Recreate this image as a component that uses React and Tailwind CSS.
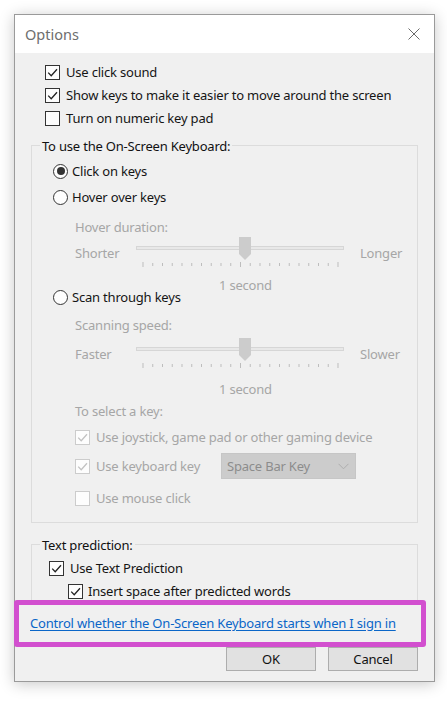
import React from 'react';

const FONT = { fontFamily: '"Noto Sans", "Open Sans", sans-serif' };

function CheckBox({ checked, disabled }) {
  return (
    <span
      className={`flex h-[15px] w-[15px] shrink-0 items-center justify-center border bg-[#fdfdfd] ${
        disabled ? 'border-[#cccccc]' : 'border-[#333333]'
      }`}
    >
      {checked && (
        <svg width="13" height="13" viewBox="0 0 13 13">
          <path
            d="M2.2 6.6 L5.2 9.7 L11 3.2"
            fill="none"
            stroke={disabled ? '#c2c2c2' : '#222'}
            strokeWidth="1.3"
          />
        </svg>
      )}
    </span>
  );
}

function Radio({ selected }) {
  return (
    <span className="flex h-[15px] w-[15px] shrink-0 items-center justify-center rounded-full border border-[#333333] bg-[#fdfdfd]">
      {selected && <span className="h-[8px] w-[8px] rounded-full bg-[#333333]" />}
    </span>
  );
}

function Slider({ left, right }) {
  const ticks = Array.from({ length: 21 }, (_, i) => 7 + i * 9.75);
  return (
    <div className="flex h-[32px] items-center pl-[43px] text-[#a6a6a6]">
      <span className="w-[61px]">{left}</span>
      <svg width="208" height="32" viewBox="0 0 208 32" className="shrink-0">
        <rect x="0.5" y="9.5" width="207" height="3" fill="#e8e8e8" stroke="#d6d6d6" />
        {ticks.map((x, i) => (
          <line
            key={i}
            x1={x}
            x2={x}
            y1={i === 10 || i === 0 || i === 20 ? 25 : 26}
            y2={i === 10 || i === 0 || i === 20 ? 30 : 29}
            stroke="#bdbdbd"
            strokeWidth="1"
          />
        ))}
        <polygon points="103,0 115,0 115,17 109,23 103,17" fill="#cccccc" />
      </svg>
      <span className="ml-[16px]">{right}</span>
    </div>
  );
}

export default function App() {
  return (
    <div
      className="min-h-[702px] bg-white pl-[14px] pt-[14px] text-[13px] leading-none tracking-[-0.2px] text-[#151515]"
      style={FONT}
    >
      <div className="relative w-[421px] border border-[#9a9a9a] bg-[#f0f0f0] shadow-[0_2px_14px_rgba(0,0,0,0.22)]">
        {/* title bar */}
        <div className="flex h-[38px] items-center justify-between bg-white pl-[10px] pr-[14px]">
          <span className="text-[14.5px] tracking-normal text-[#6e6e6e]">Options</span>
          <svg width="12" height="12" viewBox="0 0 12 12">
            <path d="M0.5 0.5 L11.5 11.5 M11.5 0.5 L0.5 11.5" stroke="#6a6a6a" strokeWidth="1" />
          </svg>
        </div>

        {/* top checkboxes */}
        <div className="flex flex-col pl-[30px] pt-[8px]">
          <label className="flex h-[23px] items-center gap-[6px]">
            <CheckBox checked />
            <span>Use click sound</span>
          </label>
          <label className="flex h-[23px] items-center gap-[6px]">
            <CheckBox checked />
            <span>Show keys to make it easier to move around the screen</span>
          </label>
          <label className="flex h-[23px] items-center gap-[6px]">
            <CheckBox />
            <span>Turn on numeric key pad</span>
          </label>
        </div>

        {/* On-Screen Keyboard group */}
        <div className="mx-[16px] mt-[15px] flex flex-col border border-[#dcdcdc] pb-[11px]">
          <div className="-mt-[10px] ml-[8px] flex h-[20px] w-fit items-center bg-[#f0f0f0] px-[2px] text-[#111]">
            To use the On-Screen Keyboard:
          </div>
          <label className="ml-[21px] mt-[2px] flex h-[26px] items-center gap-[4px]">
            <Radio selected />
            <span>Click on keys</span>
          </label>
          <label className="ml-[21px] flex h-[26px] items-center gap-[4px]">
            <Radio />
            <span>Hover over keys</span>
          </label>
          <div className="ml-[43px] mt-[7px] flex h-[20px] items-center text-[#a6a6a6]">Hover duration:</div>
          <Slider left="Shorter" right="Longer" />
          <div className="mt-[5px] flex h-[22px] items-center pl-[187px] text-[#a6a6a6]">1 second</div>
          <label className="-mt-[12px] ml-[21px] flex h-[26px] w-fit items-center gap-[4px]">
            <Radio />
            <span>Scan through keys</span>
          </label>
          <div className="ml-[43px] mt-[5px] flex h-[20px] items-center text-[#a6a6a6]">Scanning speed:</div>
          <div className="mt-[3px]">
            <Slider left="Faster" right="Slower" />
          </div>
          <div className="mt-[8px] flex h-[22px] items-center pl-[187px] text-[#a6a6a6]">1 second</div>
          <div className="ml-[43px] flex h-[22px] items-center text-[#a6a6a6]">To select a key:</div>
          <label className="ml-[43px] mt-[2px] flex h-[26px] items-center gap-[6px] text-[#a6a6a6]">
            <CheckBox checked disabled />
            <span>Use joystick, game pad or other gaming device</span>
          </label>
          <div className="ml-[43px] mt-[3px] flex h-[26px] items-center text-[#a6a6a6]">
            <label className="flex w-[146px] items-center gap-[6px]">
              <CheckBox checked disabled />
              <span>Use keyboard key</span>
            </label>
            <div className="flex h-[26px] w-[135px] items-center justify-between border border-[#c6c6c6] bg-[#cccccc] pl-[5px] pr-[6px] text-[#8c8c8c]">
              <span>Space Bar Key</span>
              <svg width="11" height="7" viewBox="0 0 11 7">
                <path d="M0.5 0.8 L5.5 5.8 L10.5 0.8" fill="none" stroke="#adadad" strokeWidth="1" />
              </svg>
            </div>
          </div>
          <label className="ml-[43px] mt-[6px] flex h-[26px] items-center gap-[6px] text-[#a6a6a6]">
            <CheckBox disabled />
            <span>Use mouse click</span>
          </label>
        </div>

        {/* Text prediction group */}
        <div className="mx-[16px] mt-[21px] flex flex-col border border-[#dcdcdc]">
          <div className="-mt-[10px] ml-[8px] flex h-[20px] w-fit items-center bg-[#f0f0f0] px-[2px] text-[#111]">
            Text prediction:
          </div>
          <label className="ml-[17px] mt-[1px] flex h-[24px] items-center gap-[6px]">
            <CheckBox checked />
            <span>Use Text Prediction</span>
          </label>
          <label className="ml-[36px] flex h-[22px] items-center gap-[5px]">
            <CheckBox checked />
            <span>Insert space after predicted words</span>
          </label>
        </div>

        {/* sign-in link */}
        <div className="ml-[15px] mt-[8px] flex h-[24px] items-center">
          <a href="#" className="text-[#0a66c8] underline underline-offset-2">
            Control whether the On-Screen Keyboard starts when I sign in
          </a>
        </div>

        {/* buttons */}
        <div className="mr-[16px] mt-[12px] flex justify-end gap-[12px] pb-[10px]">
          <button className="flex h-[24px] w-[90px] items-center justify-center border border-[#adadad] bg-[#e1e1e1] text-[#111]">
            OK
          </button>
          <button className="flex h-[24px] w-[90px] items-center justify-center border border-[#adadad] bg-[#e1e1e1] text-[#111]">
            Cancel
          </button>
        </div>

        {/* highlight annotation */}
        <div className="pointer-events-none absolute -left-[1px] top-[585px] h-[47px] w-[412px] rounded-[3px] border-[5px] border-[#d24fcf]" />
      </div>
    </div>
  );
}
